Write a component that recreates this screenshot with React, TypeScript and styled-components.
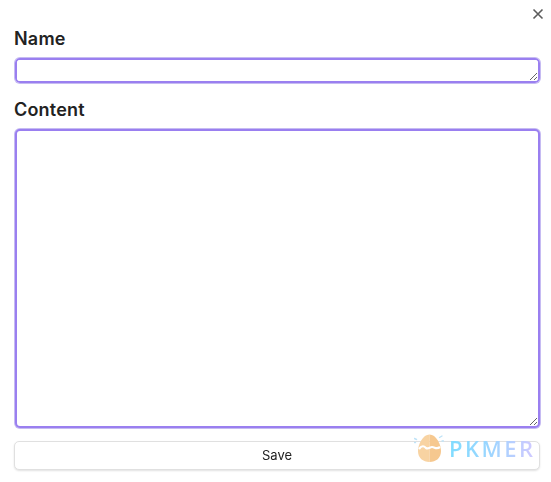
import styled, { createGlobalStyle } from "styled-components";

const GlobalStyle = createGlobalStyle`
	html, body {
		margin: 0;
		padding: 0;
		background: #ffffff;
	}
	body {
		font-family: Inter, "Liberation Sans", sans-serif;
		color: #222222;
	}
`;

const Modal = styled.div`
	position: relative;
	box-sizing: border-box;
	width: 551px;
	height: 482px;
	padding: 27px 11px 0 14px;
	overflow: hidden;
	background: #ffffff;
`;

const CloseButton = styled.button`
	position: absolute;
	top: 8px;
	right: 7px;
	width: 12px;
	height: 12px;
	padding: 0;
	border: none;
	background: none;
	color: #5c5c5c;
`;

const Form = styled.form`
	display: flex;
	flex-direction: column;
`;

const Label = styled.label`
	display: block;
	height: 23px;
	margin-bottom: 8px;
	font-size: 18px;
	font-weight: 600;
	letter-spacing: 0.2px;
	line-height: 23px;
`;

const Field = styled.textarea<{ $height: number; $gap: number }>`
	display: block;
	box-sizing: border-box;
	width: 525px;
	height: ${(p) => p.$height}px;
	margin: 0 0 ${(p) => p.$gap}px 1px;
	padding: 4px 8px;
	border: 2px solid #9a7ff0;
	border-radius: 5px;
	outline: none;
	background: #ffffff;
	box-shadow: 0 0 0 1px #c6bbf2;
	font: inherit;
`;

const SaveButton = styled.button`
	display: block;
	box-sizing: border-box;
	width: 526px;
	height: 29px;
	padding: 0;
	border: 1px solid #e0e0e0;
	border-radius: 5px;
	background: #ffffff;
	box-shadow: 0 1px 2px rgba(0, 0, 0, 0.12);
	color: #222222;
	font-family: inherit;
	font-size: 13px;
	line-height: 27px;
`;

const Watermark = styled.div`
	position: absolute;
	left: 414px;
	top: 433px;
	display: flex;
	align-items: center;
	gap: 5px;
	pointer-events: none;
`;

const WatermarkText = styled.span`
	font-family: "Open Sans", "Noto Sans", sans-serif;
	font-size: 22px;
	font-weight: 600;
	letter-spacing: 2.5px;
	line-height: 30px;
	background: linear-gradient(90deg, #7fdcff 0%, #9bd6ff 45%, #d2c8ff 100%);
	-webkit-background-clip: text;
	background-clip: text;
	color: transparent;
`;

function EggLogo() {
	return (
		<svg width="30" height="30" viewBox="0 0 30 30" aria-hidden="true">
			<path d="M15.5 1.5 C9 1.5 4 11 4 18 C4 25 9 29 15.5 29 Z" fill="#f8d3a2" />
			<path d="M15.5 1.5 C22 1.5 27 11 27 18 C27 25 22 29 15.5 29 Z" fill="#f6c88f" />
			<path
				d="M5 16 C8 12 10 13 12 15 C14 16.5 16 14 18 14 C21 14 22 17 26 14"
				fill="none"
				stroke="#ffffff"
				strokeWidth="2.2"
			/>
			<g stroke="#bfe3f7" strokeWidth="1.4" strokeLinecap="round">
				<path d="M0.5 5.5 L2.5 6.5" />
				<path d="M0.5 9.5 L1.5 9.5" />
				<path d="M25.5 4.5 L28 3" />
				<path d="M28 8 L29.5 8" />
			</g>
		</svg>
	);
}

function App() {
	return (
		<>
			<GlobalStyle />
			<Modal>
				<CloseButton type="button" aria-label="Close">
					<svg width="12" height="12" viewBox="0 0 12 12" aria-hidden="true">
						<path
							d="M1.5 1.5 L10.5 10.5 M10.5 1.5 L1.5 10.5"
							stroke="currentColor"
							strokeWidth="1.6"
						/>
					</svg>
				</CloseButton>
				<Form>
					<Label htmlFor="name">Name</Label>
					<Field id="name" $height={25} $gap={15} />
					<Label htmlFor="content">Content</Label>
					<Field id="content" $height={299} $gap={13} />
					<SaveButton type="button">Save</SaveButton>
				</Form>
				<Watermark>
					<EggLogo />
					<WatermarkText>PKMER</WatermarkText>
				</Watermark>
			</Modal>
		</>
	);
}

export default App;
